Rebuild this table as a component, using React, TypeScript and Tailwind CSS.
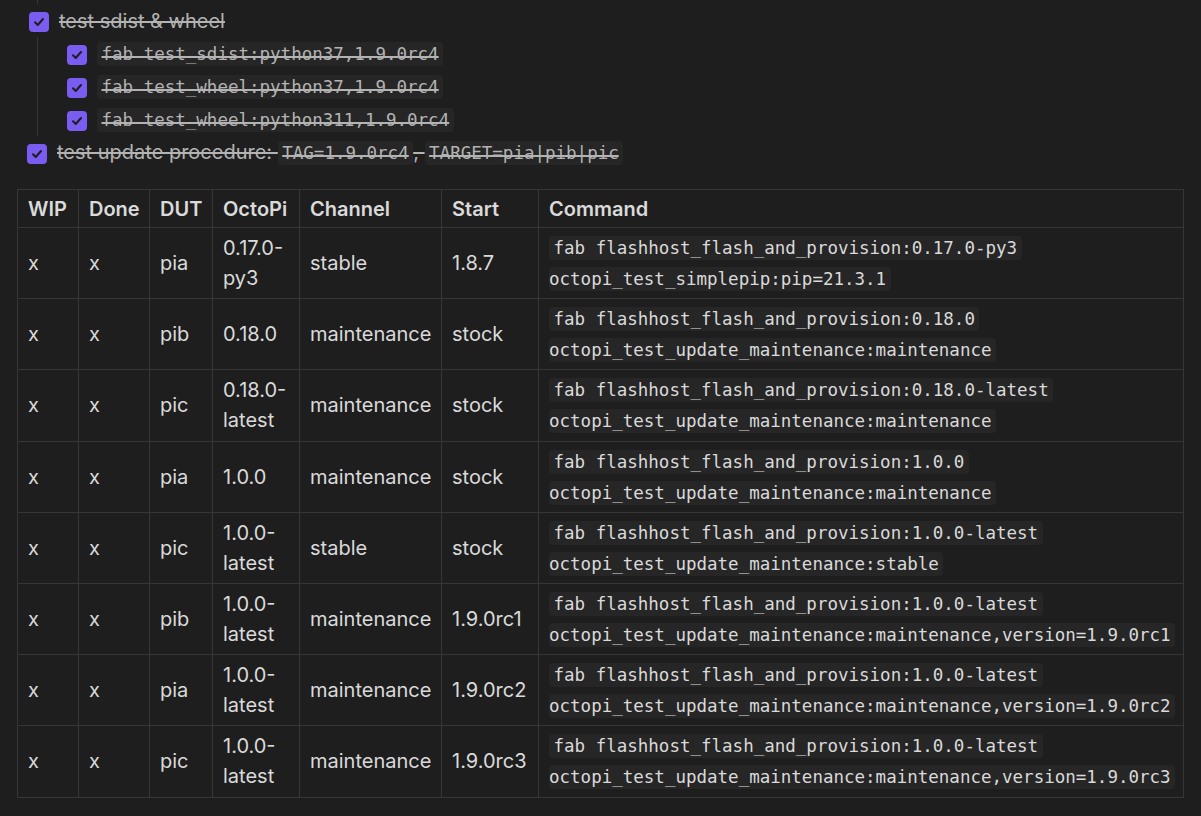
import React from "react";

type Row = {
  wip: string;
  done: string;
  dut: string;
  octopi: string[];
  channel: string;
  start: string;
  cmd: [string, string];
};

const rows: Row[] = [
  { wip: "x", done: "x", dut: "pia", octopi: ["0.17.0-", "py3"], channel: "stable", start: "1.8.7", cmd: ["fab flashhost_flash_and_provision:0.17.0-py3", "octopi_test_simplepip:pip=21.3.1"] },
  { wip: "x", done: "x", dut: "pib", octopi: ["0.18.0"], channel: "maintenance", start: "stock", cmd: ["fab flashhost_flash_and_provision:0.18.0", "octopi_test_update_maintenance:maintenance"] },
  { wip: "x", done: "x", dut: "pic", octopi: ["0.18.0-", "latest"], channel: "maintenance", start: "stock", cmd: ["fab flashhost_flash_and_provision:0.18.0-latest", "octopi_test_update_maintenance:maintenance"] },
  { wip: "x", done: "x", dut: "pia", octopi: ["1.0.0"], channel: "maintenance", start: "stock", cmd: ["fab flashhost_flash_and_provision:1.0.0", "octopi_test_update_maintenance:maintenance"] },
  { wip: "x", done: "x", dut: "pic", octopi: ["1.0.0-", "latest"], channel: "stable", start: "stock", cmd: ["fab flashhost_flash_and_provision:1.0.0-latest", "octopi_test_update_maintenance:stable"] },
  { wip: "x", done: "x", dut: "pib", octopi: ["1.0.0-", "latest"], channel: "maintenance", start: "1.9.0rc1", cmd: ["fab flashhost_flash_and_provision:1.0.0-latest", "octopi_test_update_maintenance:maintenance,version=1.9.0rc1"] },
  { wip: "x", done: "x", dut: "pia", octopi: ["1.0.0-", "latest"], channel: "maintenance", start: "1.9.0rc2", cmd: ["fab flashhost_flash_and_provision:1.0.0-latest", "octopi_test_update_maintenance:maintenance,version=1.9.0rc2"] },
  { wip: "x", done: "x", dut: "pic", octopi: ["1.0.0-", "latest"], channel: "maintenance", start: "1.9.0rc3", cmd: ["fab flashhost_flash_and_provision:1.0.0-latest", "octopi_test_update_maintenance:maintenance,version=1.9.0rc3"] },
];

const headers = ["WIP", "Done", "DUT", "OctoPi", "Channel", "Start", "Command"];
const widths = ["w-[61px]", "w-[71px]", "w-[63px]", "w-[87px]", "w-[142px]", "w-[97px]", "w-[645px]"];

function Check() {
  return (
    <span className="w-[20px] h-[20px] shrink-0 rounded-[4px] bg-[#7b5cf0] flex items-center justify-center translate-y-[1px]">
      <svg width="12" height="12" viewBox="0 0 24 24" fill="none" stroke="#1e1e1e" strokeWidth="4" strokeLinecap="round" strokeLinejoin="round">
        <polyline points="4 12.5 9.5 18 20 6" />
      </svg>
    </span>
  );
}

function Code({ children }: { children: React.ReactNode }) {
  return (
    <code className="font-['DejaVu_Sans_Mono',monospace] text-[17.5px] bg-[#262626] rounded-[4px] px-[4.5px] py-[2px]">
      {children}
    </code>
  );
}

export default function App() {
  return (
    <div className="min-h-screen bg-[#1e1e1e] text-[#dadada] font-['Inter','Noto_Sans',sans-serif] text-[20px] leading-[30px]">
      <div className="ml-[37px] w-px h-[4px] bg-[#363636]" />

      <div className="text-[#b3b3b3]">
        <div className="flex items-center h-[33px] pl-[29px] gap-[10px]">
          <Check />
          <span className="line-through">test sdist &amp; wheel</span>
        </div>
        <div className="ml-[37px] border-l border-[#363636] pl-[29px]">
          {["fab test_sdist:python37,1.9.0rc4", "fab test_wheel:python37,1.9.0rc4", "fab test_wheel:python311,1.9.0rc4"].map((t) => (
            <div key={t} className="flex items-center h-[33px] gap-[10px]">
              <Check />
              <span className="line-through">
                <Code>{t}</Code>
              </span>
            </div>
          ))}
        </div>
        <div className="flex items-center h-[33px] pl-[27px] gap-[10px]">
          <Check />
          <span className="line-through whitespace-pre">
            test update procedure: <Code>TAG=1.9.0rc4</Code>, <Code>TARGET=pia|pib|pic</Code>
          </span>
        </div>
      </div>

      <table className="mt-[20px] ml-[17px] w-[1166px] table-fixed border-collapse">
        <colgroup>
          {widths.map((w, i) => (
            <col key={i} className={w} />
          ))}
        </colgroup>
        <thead>
          <tr className="h-[38px]">
            {headers.map((h) => (
              <th key={h} className="border border-[#363636] px-[10px] py-0 text-left font-semibold">
                {h}
              </th>
            ))}
          </tr>
        </thead>
        <tbody>
          {rows.map((r, i) => (
            <tr key={i} className="h-[71.2px]">
              <td className="border border-[#363636] px-[10px] py-0">{r.wip}</td>
              <td className="border border-[#363636] px-[10px] py-0">{r.done}</td>
              <td className="border border-[#363636] px-[10px] py-0">{r.dut}</td>
              <td className="border border-[#363636] px-[10px] py-0">
                {r.octopi.map((l, j) => (
                  <div key={j}>{l}</div>
                ))}
              </td>
              <td className="border border-[#363636] px-[10px] py-0">{r.channel}</td>
              <td className="border border-[#363636] px-[10px] py-0">{r.start}</td>
              <td className="border border-[#363636] px-[10px] py-0 whitespace-nowrap">
                <code className="font-['DejaVu_Sans_Mono',monospace] text-[17.5px] bg-[#262626] rounded-[4px] px-[4.5px] py-[2px]">
                  {r.cmd[0]}
                </code>
                <br />
                <code className="font-['DejaVu_Sans_Mono',monospace] text-[17.5px] bg-[#262626] rounded-[4px] pr-[4.5px] py-[2px]">
                  {r.cmd[1]}
                </code>
              </td>
            </tr>
          ))}
        </tbody>
      </table>
    </div>
  );
}
